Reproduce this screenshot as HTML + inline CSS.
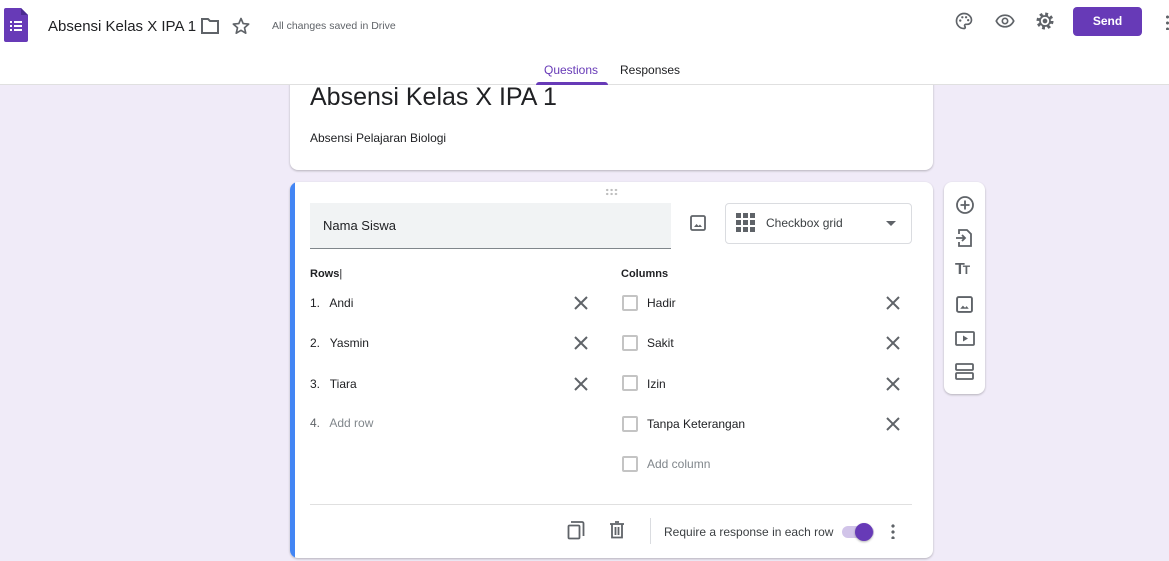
<!DOCTYPE html>
<html><head><meta charset="utf-8"><style>
*{box-sizing:border-box;margin:0;padding:0}
body{width:1169px;height:561px;overflow:hidden;background:#f0ebf8;font-family:"Liberation Sans",Arial,sans-serif;color:#202124;position:relative}
.abs{position:absolute}
.hdr{position:absolute;left:0;top:0;width:1169px;height:85px;background:#fff;border-bottom:1px solid #e0e0e0;z-index:5}
.card{position:absolute;background:#fff;border-radius:8px;box-shadow:0 1px 2px rgba(0,0,0,.25)}
.t{position:absolute;font-size:12px;color:#202124;white-space:nowrap}
.cb{position:absolute;width:16px;height:16px;border:2px solid #c4c4c4;border-radius:2px}
svg{position:absolute}
</style></head><body>
<div class="hdr">
 <svg style="left:4px;top:8px" width="24" height="34" viewBox="0 0 24 34"><path d="M2 0h15l7 7v25a2 2 0 0 1-2 2H2a2 2 0 0 1-2-2V2a2 2 0 0 1 2-2z" fill="#673ab7"/><path d="M17 0v7h7z" fill="#4a2a91"/><g fill="#fff"><rect x="6" y="13" width="2" height="2"/><rect x="10" y="13" width="8" height="2"/><rect x="6" y="17" width="2" height="2"/><rect x="10" y="17" width="8" height="2"/><rect x="6" y="21" width="2" height="2"/><rect x="10" y="21" width="8" height="2"/></g></svg>
 <div class="t" style="left:48px;top:18px;font-size:15px;color:#202124">Absensi Kelas X IPA 1</div>
 <svg style="left:200px;top:17px" width="20" height="18" viewBox="0 0 20 18"><path d="M2 2h6l2 2h8v12H2z" fill="none" stroke="#5f6368" stroke-width="2"/></svg>
 <svg style="left:231px;top:16px" width="20" height="20" viewBox="0 0 24 24"><path d="M12 3l2.6 6.1 6.6.6-5 4.4 1.5 6.5L12 17.2l-5.7 3.4 1.5-6.5-5-4.4 6.6-.6z" fill="none" stroke="#5f6368" stroke-width="2" stroke-linejoin="round"/></svg>
 <div class="t" style="left:272px;top:20px;font-size:10.5px;color:#5f6368">All changes saved in Drive</div>
 <svg style="left:954px;top:11px" width="20" height="20" viewBox="0 0 24 24"><path d="M12 3a9 9 0 0 0 0 18c1 0 1.5-.7 1.5-1.5 0-.9-.8-1.2-.8-2 0-.8.7-1.5 1.5-1.5H16a5 5 0 0 0 5-5c0-4.4-4-8-9-8z" fill="none" stroke="#5f6368" stroke-width="2"/><circle cx="7.5" cy="11.5" r="1.4" fill="#5f6368"/><circle cx="10" cy="7.5" r="1.4" fill="#5f6368"/><circle cx="14.5" cy="7.5" r="1.4" fill="#5f6368"/><circle cx="17" cy="11" r="1.4" fill="#5f6368"/></svg>
 <svg style="left:994px;top:11px" width="22" height="20" viewBox="0 0 24 24"><path d="M1.5 12C4 7 8 5 12 5s8 2 10.5 7c-2.5 5-6.5 7-10.5 7S4 17 1.5 12z" fill="none" stroke="#5f6368" stroke-width="2"/><circle cx="12" cy="12" r="3.2" fill="none" stroke="#5f6368" stroke-width="2"/></svg>
 <svg style="left:1035px;top:11px" width="20" height="20" viewBox="0 0 24 24"><circle cx="12" cy="12" r="7" fill="none" stroke="#5f6368" stroke-width="2.4" stroke-dasharray="3.3 2.2"/><circle cx="12" cy="12" r="6" fill="none" stroke="#5f6368" stroke-width="2"/><circle cx="12" cy="12" r="2.8" fill="#5f6368"/><circle cx="12" cy="12" r="9" fill="none" stroke="#5f6368" stroke-width="2.5" stroke-dasharray="3.5 3.57"/></svg>
 <div class="abs" style="left:1073px;top:7px;width:69px;height:29px;background:#673ab7;border-radius:4px;color:#fff;font-size:12px;font-weight:bold;text-align:center;line-height:29px">Send</div>
 <div class="abs" style="left:1166px;top:14px;width:3px;height:16px;background:radial-gradient(circle,#5f6368 1.4px,transparent 1.6px) 0 0/3px 6px"></div>
 <div class="t" style="left:544px;top:63px;color:#673ab7">Questions</div>
 <div class="abs" style="left:536px;top:82px;width:72px;height:3px;background:#673ab7;border-radius:3px 3px 0 0"></div>
 <div class="t" style="left:620px;top:63px;color:#202124">Responses</div>
</div>

<div class="card" style="left:290px;top:60px;width:643px;height:110px">
 <div class="t" style="left:20px;top:23px;font-size:25px">Absensi Kelas X IPA 1</div>
 <div class="t" style="left:20px;top:71px;font-size:12px">Absensi Pelajaran Biologi</div>
</div>

<div class="card" style="left:290px;top:182px;width:643px;height:376px;overflow:hidden">
 <div class="abs" style="left:0;top:0;width:5px;height:376px;background:#4285f4"></div>
 <div class="abs" style="left:315px;top:6px;width:13px;height:8px;background:radial-gradient(circle,#bdbdbd 1.1px,transparent 1.3px) 0 0/4.4px 4px"></div>
 <div class="abs" style="left:20px;top:21px;width:361px;height:46px;background:#f1f3f4;border-bottom:1px solid #80868b"></div>
 <div class="t" style="left:33px;top:36px;font-size:13px">Nama Siswa</div>
 <svg style="left:400px;top:33px" width="16" height="16" viewBox="0 0 16 16"><rect x="1" y="1" width="14" height="14" rx="1.5" fill="none" stroke="#5f6368" stroke-width="1.8"/><path d="M4 12l2.5-3 2 2 1.5-1.5L12 12z" fill="#5f6368"/></svg>
 <div class="abs" style="left:435px;top:21px;width:187px;height:41px;border:1px solid #dadce0;border-radius:4px"></div>
 <svg style="left:446px;top:31px" width="20" height="20" viewBox="0 0 20 20" fill="#5f6368"><rect x="0" y="0" width="5" height="5"/><rect x="7" y="0" width="5" height="5"/><rect x="14" y="0" width="5" height="5"/><rect x="0" y="7" width="5" height="5"/><rect x="7" y="7" width="5" height="5"/><rect x="14" y="7" width="5" height="5"/><rect x="0" y="14" width="5" height="5"/><rect x="7" y="14" width="5" height="5"/><rect x="14" y="14" width="5" height="5"/></svg>
 <div class="t" style="left:476px;top:34px;font-size:12px;color:#3c4043">Checkbox grid</div>
 <svg style="left:596px;top:39px" width="10" height="5" viewBox="0 0 10 5"><path d="M0 0h10L5 5z" fill="#5f6368"/></svg>

 <div class="t" style="left:20px;top:86px;font-weight:bold;font-size:11px">Rows<span style="font-weight:normal">|</span></div>
 <div class="t" style="left:331px;top:86px;font-weight:bold;font-size:11px">Columns</div>

 <div class="t" style="left:20px;top:114px;font-size:12px">1.&nbsp;&nbsp; Andi</div>
 <div class="t" style="left:20px;top:154px;font-size:12px">2.&nbsp;&nbsp; Yasmin</div>
 <div class="t" style="left:20px;top:195px;font-size:12px">3.&nbsp;&nbsp; Tiara</div>
 <div class="t" style="left:20px;top:234px;font-size:12px;color:#80868b"><span style="color:#5f6368">4.</span>&nbsp;&nbsp; Add row</div>

 <div class="cb" style="left:332px;top:113px"></div><div class="t" style="left:357px;top:114px">Hadir</div>
 <div class="cb" style="left:332px;top:153px"></div><div class="t" style="left:357px;top:154px">Sakit</div>
 <div class="cb" style="left:332px;top:193px"></div><div class="t" style="left:357px;top:195px">Izin</div>
 <div class="cb" style="left:332px;top:234px"></div><div class="t" style="left:357px;top:235px">Tanpa Keterangan</div>
 <div class="cb" style="left:332px;top:274px"></div><div class="t" style="left:357px;top:275px;color:#80868b">Add column</div>

 <svg style="left:284px;top:114px" width="14" height="14" viewBox="0 0 14 14"><path d="M1 1l12 12M13 1L1 13" stroke="#5f6368" stroke-width="2"/></svg>
 <svg style="left:284px;top:154px" width="14" height="14" viewBox="0 0 14 14"><path d="M1 1l12 12M13 1L1 13" stroke="#5f6368" stroke-width="2"/></svg>
 <svg style="left:284px;top:195px" width="14" height="14" viewBox="0 0 14 14"><path d="M1 1l12 12M13 1L1 13" stroke="#5f6368" stroke-width="2"/></svg>
 <svg style="left:596px;top:114px" width="14" height="14" viewBox="0 0 14 14"><path d="M1 1l12 12M13 1L1 13" stroke="#5f6368" stroke-width="2"/></svg>
 <svg style="left:596px;top:154px" width="14" height="14" viewBox="0 0 14 14"><path d="M1 1l12 12M13 1L1 13" stroke="#5f6368" stroke-width="2"/></svg>
 <svg style="left:596px;top:195px" width="14" height="14" viewBox="0 0 14 14"><path d="M1 1l12 12M13 1L1 13" stroke="#5f6368" stroke-width="2"/></svg>
 <svg style="left:596px;top:235px" width="14" height="14" viewBox="0 0 14 14"><path d="M1 1l12 12M13 1L1 13" stroke="#5f6368" stroke-width="2"/></svg>

 <div class="abs" style="left:20px;top:322px;width:602px;height:1px;background:#e0e0e0"></div>
 <svg style="left:277px;top:339px" width="18" height="19" viewBox="0 0 18 19"><path d="M4 1h11a1.5 1.5 0 0 1 1.5 1.5V15" fill="none" stroke="#5f6368" stroke-width="1.8"/><rect x="1.5" y="4.5" width="11" height="13" rx="1" fill="none" stroke="#5f6368" stroke-width="1.8"/></svg>
 <svg style="left:319px;top:339px" width="16" height="18" viewBox="0 0 16 18"><path d="M1 3h14M6 1h4M3 3v13.5h10V3M6.5 6v8M9.5 6v8" fill="none" stroke="#5f6368" stroke-width="1.8"/></svg>
 <div class="abs" style="left:360px;top:336px;width:1px;height:26px;background:#dadce0"></div>
 <div class="t" style="left:374px;top:343px;font-size:12px;color:#3c4043">Require a response in each row</div>
 <div class="abs" style="left:552px;top:344px;width:32px;height:12px;border-radius:6px;background:#d1c4e9"></div>
 <div class="abs" style="left:565px;top:341px;width:18px;height:18px;border-radius:50%;background:#673ab7;box-shadow:0 1px 2px rgba(0,0,0,.3)"></div>
 <div class="abs" style="left:601px;top:341px;width:4px;height:16px;background:radial-gradient(circle,#5f6368 1.6px,transparent 1.8px) 0 0/4px 6px"></div>
</div>

<div class="card" style="left:944px;top:182px;width:41px;height:212px">
 <svg style="left:11px;top:13px" width="20" height="20" viewBox="0 0 20 20"><circle cx="10" cy="10" r="8" fill="none" stroke="#5f6368" stroke-width="1.8"/><path d="M10 5.5v9M5.5 10h9" stroke="#5f6368" stroke-width="1.8"/></svg>
 <svg style="left:12px;top:46px" width="18" height="20" viewBox="0 0 18 20"><path d="M3 6V2h8l4 4v12H3v-4" fill="none" stroke="#5f6368" stroke-width="1.8"/><path d="M0 10h9M6 7l3 3-3 3" fill="none" stroke="#5f6368" stroke-width="1.8"/></svg>
 <div class="t" style="left:11px;top:79px;font-size:16px;font-weight:bold;color:#5f6368;letter-spacing:-2px">T<span style="font-size:12px">T</span></div>
 <svg style="left:12px;top:114px" width="17" height="17" viewBox="0 0 16 16"><rect x="1" y="1" width="14" height="14" rx="1.5" fill="none" stroke="#5f6368" stroke-width="1.8"/><path d="M4 12l2.5-3 2 2 1.5-1.5L12 12z" fill="#5f6368"/></svg>
 <svg style="left:11px;top:149px" width="20" height="15" viewBox="0 0 20 15"><rect x="1" y="1" width="18" height="13" rx="1" fill="none" stroke="#5f6368" stroke-width="1.8"/><path d="M8 4.5v6l5-3z" fill="#5f6368"/></svg>
 <svg style="left:11px;top:181px" width="19" height="17" viewBox="0 0 19 17"><rect x="1" y="1" width="17" height="6" rx="1" fill="none" stroke="#5f6368" stroke-width="1.8"/><rect x="1" y="10" width="17" height="6" rx="1" fill="none" stroke="#5f6368" stroke-width="1.8"/></svg>
</div>
</body></html>
